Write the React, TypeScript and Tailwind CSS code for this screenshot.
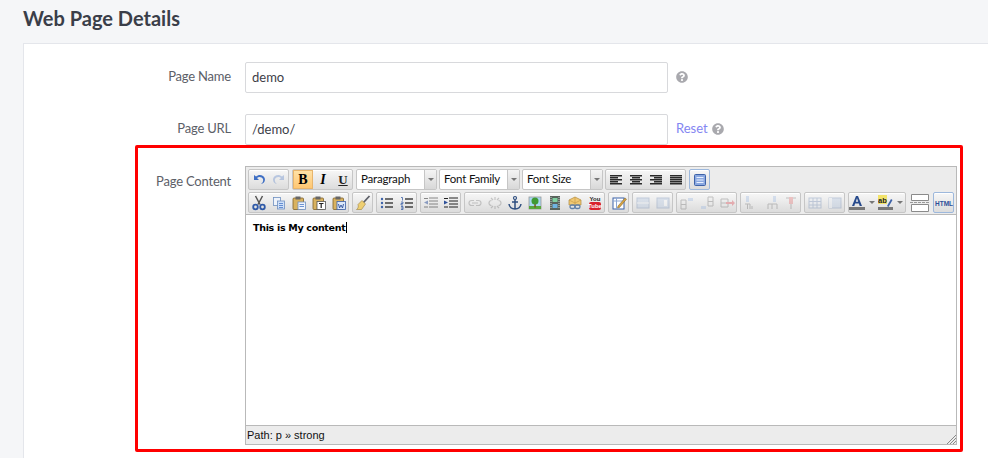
import type { ReactNode } from "react";
import { FaQuestionCircle } from "react-icons/fa";

function Ico({ children, off }: { children: ReactNode; off?: boolean }) {
  return (
    <svg viewBox="0 0 16 16" className={`h-4 w-4 ${off ? "opacity-30" : ""}`}>
      {children}
    </svg>
  );
}

function Btn({ children, on }: { children: ReactNode; on?: boolean }) {
  return (
    <span
      className={`flex h-full w-5 shrink-0 items-center justify-center ${
        on ? "bg-gradient-to-b from-[#ffe3a8] to-[#ffc56e] shadow-[inset_0_0_0_1px_#e8b56c]" : ""
      }`}
    >
      {children}
    </span>
  );
}

function Group({ children, blue, className = "" }: { children: ReactNode; blue?: boolean; className?: string }) {
  return (
    <div
      className={`flex h-[21px] shrink-0 items-center rounded-[2px] border bg-gradient-to-b from-[#f7f7f7] to-[#dcdcdc] shadow-[inset_0_1px_0_#fff] [&>*:last-child]:mr-[-1px] ${
        blue ? "border-[#9db8dc]" : "border-[#c6c6c6]"
      } ${className}`}
    >
      {children}
    </div>
  );
}

function Select({ label, className = "" }: { label: string; className?: string }) {
  return (
    <div className={`flex h-[21px] w-[81px] shrink-0 rounded-[2px] border border-[#c6c6c6] bg-white ${className}`}>
      <span className="flex-1 pl-[4px] text-[11.500px] leading-[18px] tracking-[-0.2px] text-[#111]">{label}</span>
      <span className="flex w-3 items-center justify-center border-l border-[#c6c6c6] bg-gradient-to-b from-[#f4f4f4] to-[#d8d8d8]">
        <span className="border-x-[3px] border-t-[3px] border-x-transparent border-t-[#777]" />
      </span>
    </div>
  );
}

function Lines({ rows }: { rows: [number, number][] }) {
  return (
    <Ico>
      {rows.map(([x, w], i) => (
        <rect key={i} x={x} y={3 + i * 2} width={w} height="1.5" fill="#2a2a2a" />
      ))}
    </Ico>
  );
}

function Row({ label, value, children }: { label: string; value: string; children: ReactNode }) {
  return (
    <div className="flex h-[31px] items-center">
      <label className="w-[207px] pb-[2px] text-right tracking-[-0.2px] text-[#5c6068]">{label}</label>
      <input
        readOnly
        value={value}
        className="ml-[14px] h-[31px] w-[423px] rounded-[2px] border border-[#d8d9dc] px-[6px] pb-[2px] text-[#3d4048] outline-none"
      />
      {children}
    </div>
  );
}

const Caret = ({ className }: { className: string }) => (
  <span className={`w-[6px] shrink-0 border-x-[3px] border-t-[3px] border-x-transparent border-t-[#777] ${className}`} />
);

const undo = (
  <Ico>
    <path d="M3 3v5h5L6 6c2-2 5-1 6 1 .6 2-.4 4-2 5 3-.4 4.400-3 3.800-5.500C13 3 8 1.500 5 4.500z" fill="#3f6fc4" />
  </Ico>
);
const redo = (
  <Ico off>
    <path d="M13 3v5H8l2-2c-2-2-5-1-6 1-.6 2 .4 4 2 5-3-.4-4.400-3-3.800-5.500C3 3 8 1.500 11 4.500z" fill="#3f6fc4" />
  </Ico>
);
const paper = (x: number, y: number, w: number, h: number, fill = "#fff") => (
  <rect x={x} y={y} width={w} height={h} fill={fill} stroke="#6f8fc0" strokeWidth=".8" />
);
const board = (
  <>
    <rect x="2" y="3" width="10.500" height="11.500" rx="1" fill="#d9b25f" stroke="#7d6128" strokeWidth=".8" />
    <rect x="4.500" y="1.500" width="5" height="3" fill="#666" />
  </>
);

export default function App() {
  return (
    <div className="relative h-[458px] w-[988px] overflow-hidden bg-[#f5f6f8] font-['Lato',sans-serif] text-[13px]">
      <h1 className="pl-[23px] pt-[4px] text-[20px] font-bold leading-[28px] text-[#3a3e49]">Web Page Details</h1>
      <div className="ml-[23px] mt-[11px] h-[500px] w-[1000px] border border-[#e4e6eb] bg-white pt-[18px]">
        <Row label="Page Name" value="demo">
          <FaQuestionCircle className="mb-[2px] ml-2 text-[12px] text-[#a9a9ae]" />
        </Row>
        <div className="mt-[21px]">
          <Row label="Page URL" value="/demo/">
            <a className="mb-[2px] ml-2 text-[#8486f2]">Reset</a>
            <FaQuestionCircle className="mb-[2px] ml-1 text-[12px] text-[#a9a9ae]" />
          </Row>
        </div>
        <div className="mt-[21px] flex">
          <label className="w-[207px] pt-[6px] text-right tracking-[-0.2px] text-[#5c6068]">Page Content</label>
          <div className="ml-[14px] flex h-[279px] w-[712px] flex-col border border-[#b9b9b9] bg-[#ececec]">
            <div className="flex h-[48px] flex-col gap-[2px] border-b border-[#b9b9b9] px-[2px] pt-[2px]">
              <div className="flex gap-[3px]">
                <Group>
                  <Btn>{undo}</Btn>
                  <Btn>{redo}</Btn>
                </Group>
                <Group>
                  <Btn on>
                    <b className="font-['Liberation_Serif',serif] text-[14px] font-bold text-black">B</b>
                  </Btn>
                  <Btn>
                    <b className="font-['Liberation_Serif',serif] text-[14px] font-bold italic text-black">I</b>
                  </Btn>
                  <Btn>
                    <b className="font-['Liberation_Serif',serif] text-[13px] font-bold text-[#222] underline">U</b>
                  </Btn>
                </Group>
                <Select label="Paragraph" />
                <Select label="Font Family" className="ml-[-1px]" />
                <Select label="Font Size" className="ml-[-1px]" />
                <Group className="ml-[-1px]">
                  <Btn><Lines rows={[[2, 12], [2, 8], [2, 12], [2, 8], [2, 12]]} /></Btn>
                  <Btn><Lines rows={[[2, 12], [4, 8], [2, 12], [4, 8], [2, 12]]} /></Btn>
                  <Btn><Lines rows={[[2, 12], [6, 8], [2, 12], [6, 8], [2, 12]]} /></Btn>
                  <Btn><Lines rows={[[2, 12], [2, 12], [2, 12], [2, 12], [2, 12]]} /></Btn>
                </Group>
                <Group blue>
                  <Btn>
                    <Ico>
                      <rect x="2.500" y="2.500" width="11" height="11" rx="1" fill="#8aa8e0" stroke="#3d62a8" />
                      <path d="M4.500 5.500h7M4.500 8h7M4.500 10.500h7" stroke="#e8f0ff" />
                    </Ico>
                  </Btn>
                </Group>
              </div>
              <div className="flex gap-[3px]">
                <Group>
                  <Btn>
                    <Ico>
                      <path d="M4.500 1l4.500 8.500M11.500 1L7 9.500" stroke="#555" strokeWidth="1.500" />
                      <circle cx="4.500" cy="12" r="2.300" fill="none" stroke="#2f5aa8" strokeWidth="1.800" />
                      <circle cx="11.500" cy="12" r="2.300" fill="none" stroke="#2f5aa8" strokeWidth="1.800" />
                    </Ico>
                  </Btn>
                  <Btn>
                    <Ico>
                      {paper(2.500, 2.500, 7, 8, "#eef3fb")}
                      {paper(6.500, 6, 7, 8, "#cfe0f8")}
                      <path d="M8 8.500h4M8 10.500h4M8 12.500h4" stroke="#4a78c8" strokeWidth=".8" />
                    </Ico>
                  </Btn>
                  <Btn>
                    <Ico>
                      {board}
                      {paper(7, 7, 7.500, 7.500, "#eef3fb")}
                      <path d="M8.500 9.500h4.500M8.500 11.500h4.500" stroke="#4a78c8" strokeWidth=".8" />
                    </Ico>
                  </Btn>
                  <Btn>
                    <Ico>
                      {board}
                      <rect x="6" y="6.500" width="8.500" height="8" fill="#fff" stroke="#555" strokeWidth=".8" />
                      <path d="M8 8.500h4.500M10.200 8.500v4.500" stroke="#222" strokeWidth="1.200" />
                    </Ico>
                  </Btn>
                  <Btn>
                    <Ico>
                      {board}
                      <rect x="6" y="6.500" width="8.500" height="8" fill="#dce8fa" stroke="#3d62a8" strokeWidth=".8" />
                      <path d="M7.500 9l1 4 1.500-3 1.500 3 1-4" stroke="#2c4f98" strokeWidth=".9" fill="none" />
                    </Ico>
                  </Btn>
                </Group>
                <Group>
                  <Btn>
                    <Ico>
                      <path d="M14.500 1L8 8" stroke="#5d5f68" strokeWidth="1.800" />
                      <path d="M7 5.500l3.500 3.500-4 5.500H1.500c2-1.500 2-3 1.500-5z" fill="#eecf72" stroke="#9a8040" strokeWidth=".6" />
                    </Ico>
                  </Btn>
                </Group>
                <Group>
                  <Btn>
                    <Ico>
                      <path d="M6 4h8M6 8h8M6 12h8" stroke="#444" strokeWidth="1.300" />
                      <circle cx="3" cy="4" r="1.200" fill="#3d62a8" />
                      <circle cx="3" cy="8" r="1.200" fill="#3d62a8" />
                      <circle cx="3" cy="12" r="1.200" fill="#3d62a8" />
                    </Ico>
                  </Btn>
                  <Btn>
                    <Ico>
                      <path d="M6 4h8M6 8h8M6 12h8" stroke="#444" strokeWidth="1.300" />
                      <path d="M2 2.500h1.500v3M2 7h2v1.500H2V10h2M2 11.500h2v3H2M2 13h2" stroke="#3d62a8" strokeWidth=".8" fill="none" />
                    </Ico>
                  </Btn>
                </Group>
                <Group>
                  <Btn>
                    <svg viewBox="0 0 16 16" className="h-4 w-4 opacity-50">
                      <path d="M6 3h9M6 6h9M6 9h9M6 12h9M1 3.500h4M1 12h4" stroke="#222" strokeWidth="1.200" />
                      <path d="M5 5.500L1 7.500 5 9.500z" fill="#2c4f98" />
                    </svg>
                  </Btn>
                  <Btn>
                    <Ico>
                      <path d="M6 3h9M6 6h9M6 9h9M6 12h9M1 3.500h4M1 12h4" stroke="#222" strokeWidth="1.200" />
                      <path d="M1 5.500l4 2-4 2z" fill="#2c4f98" />
                    </Ico>
                  </Btn>
                </Group>
                <Group>
                  <Btn>
                    <Ico off>
                      <path d="M2 8a2.500 2.500 0 012.500-2.500h2.500M14 8a2.500 2.500 0 01-2.500 2.500H9M2 8a2.500 2.500 0 002.500 2.500H7M14 8a2.500 2.500 0 00-2.500-2.500H9M5 8h6" stroke="#666" strokeWidth="1.200" fill="none" />
                    </Ico>
                  </Btn>
                  <Btn>
                    <Ico off>
                      <path d="M2 8a2.500 2.500 0 012.500-2.500M2 8a2.500 2.500 0 002.500 2.500M14 8a2.500 2.500 0 01-2.500 2.500M14 8a2.500 2.500 0 00-2.500-2.500M8 2v3M8 11v3M4 3l2 2M12 3l-2 2M4 13l2-2M12 13l-2-2" stroke="#666" strokeWidth="1.200" fill="none" />
                    </Ico>
                  </Btn>
                  <Btn>
                    <Ico>
                      <circle cx="8" cy="3" r="1.500" fill="none" stroke="#2f4f80" strokeWidth="1.200" />
                      <path d="M8 4.500V14M5 7h6M2 9c.5 3 3 5 6 5s5.500-2 6-5" stroke="#2f4f80" strokeWidth="1.500" fill="none" />
                    </Ico>
                  </Btn>
                  <Btn>
                    <Ico>
                      <rect x="2" y="2" width="12" height="12" fill="#a8d8f0" stroke="#9a9a9a" strokeWidth=".8" />
                      <path d="M2 11h12v3H2z" fill="#58a83c" />
                      <rect x="7.300" y="8" width="1.500" height="4.500" fill="#7c5226" />
                      <circle cx="8" cy="6" r="3.500" fill="#3f9a34" />
                    </Ico>
                  </Btn>
                  <Btn>
                    <Ico>
                      <rect x="3" y="1" width="10" height="14" fill="#59635c" />
                      <rect x="5.500" y="3" width="5" height="4" fill="#7fd0a0" />
                      <rect x="5.500" y="9" width="5" height="4" fill="#6fb4e0" />
                      <path d="M4 2v12M12 2v12" stroke="#c8d0cc" strokeWidth="1" strokeDasharray="1 1" />
                    </Ico>
                  </Btn>
                  <Btn>
                    <Ico>
                      <path d="M2 5l6-3 6 3v5H2z" fill="#f0c874" stroke="#b08a3c" strokeWidth=".7" />
                      <path d="M8 2v7M2 5l6 3 6-3" stroke="#c79c48" strokeWidth=".7" fill="none" />
                      <rect x="3" y="10" width="5" height="3.500" rx="1.700" fill="none" stroke="#5f7fa8" strokeWidth="1.300" />
                      <rect x="8" y="10" width="5" height="3.500" rx="1.700" fill="none" stroke="#5f7fa8" strokeWidth="1.300" />
                    </Ico>
                  </Btn>
                  <Btn>
                    <Ico>
                      <text x="8" y="6" textAnchor="middle" fontSize="6" fontWeight="700" fontFamily="Liberation Sans" fill="#222">You</text>
                      <rect x="2" y="7" width="12" height="8" rx="2" fill="#d9232e" />
                      <text x="8" y="13" textAnchor="middle" fontSize="6" fontWeight="700" fontFamily="Liberation Sans" fill="#fff">Tube</text>
                    </Ico>
                  </Btn>
                </Group>
                <Group>
                  <Btn>
                    <Ico>
                      <rect x="2" y="3" width="11" height="11" fill="#fff" stroke="#3d62a8" />
                      <path d="M2 6h11M5.500 3v11" stroke="#8aa6d4" />
                      <path d="M7 11l7-8 1.500 1.200L8.500 12.500 6.500 13z" fill="#d9a441" stroke="#6e5a30" strokeWidth=".5" />
                    </Ico>
                  </Btn>
                </Group>
                <Group>
                  <Btn>
                    <Ico off>
                      <rect x="2" y="3" width="12" height="10" fill="#a9c0e0" stroke="#5878aa" />
                      <path d="M2 8h12" stroke="#fff" />
                    </Ico>
                  </Btn>
                  <Btn>
                    <Ico off>
                      <rect x="2" y="3" width="12" height="10" fill="#a9c0e0" stroke="#5878aa" />
                      <rect x="9" y="5" width="3" height="6" fill="#fff" />
                    </Ico>
                  </Btn>
                </Group>
                <Group>
                  <Btn>
                    <Ico off>
                      <path d="M2 5h5v9H2zM2 9.500h5" stroke="#555" fill="none" />
                      <path d="M9 3h5v3H9" fill="#8fb0e0" />
                    </Ico>
                  </Btn>
                  <Btn>
                    <Ico off>
                      <path d="M9 2h5v9H9zM9 6.500h5" stroke="#555" fill="none" />
                      <path d="M2 11h5v3H2" fill="#8fb0e0" />
                    </Ico>
                  </Btn>
                  <Btn>
                    <Ico off>
                      <path d="M2 4h7v8H2zM2 8h7" stroke="#555" fill="none" />
                      <path d="M7 7h6V5l3 3-3 3V9H7z" fill="#d9232e" />
                    </Ico>
                  </Btn>
                </Group>
                <Group>
                  <Btn>
                    <Ico off>
                      <path d="M2 9h5v5M4.500 9v5M9 11v3" stroke="#555" fill="none" />
                      <rect x="3" y="1" width="3" height="6" fill="#8fb0e0" />
                    </Ico>
                  </Btn>
                  <Btn>
                    <Ico off>
                      <path d="M5 9h9v5M9 9v5M5 9v5" stroke="#555" fill="none" />
                      <rect x="10" y="1" width="3" height="6" fill="#8fb0e0" />
                    </Ico>
                  </Btn>
                  <Btn>
                    <Ico off>
                      <path d="M3 3h10M8 3v11" stroke="#555" fill="none" />
                      <rect x="6" y="2" width="4" height="7" fill="#e05a5a" />
                    </Ico>
                  </Btn>
                </Group>
                <Group>
                  <Btn>
                    <Ico off>
                      <rect x="2" y="3" width="12" height="10" fill="#e6ecf6" stroke="#5878aa" />
                      <path d="M6 3v10M10 3v10M2 6.500h12M2 10h12" stroke="#5878aa" />
                    </Ico>
                  </Btn>
                  <Btn>
                    <Ico off>
                      <rect x="2" y="3" width="12" height="10" fill="#a9c0e0" stroke="#5878aa" />
                      <rect x="2" y="3" width="3" height="10" fill="#e6ecf6" />
                    </Ico>
                  </Btn>
                </Group>
                <Group className="w-[58px]">
                  <span className="flex w-4 shrink-0">
                    <Ico>
                      <path d="M3 11L7 1h2l4 10h-2.300l-.8-2.400H6.100L5.300 11zM6.800 6.800h2.400L8 3.300z" fill="#274a8c" />
                      <rect x="0" y="12" width="16" height="3" fill="#777" />
                    </Ico>
                  </span>
                  <Caret className="ml-[4px]" />
                  <span className="ml-[3px] flex w-4 shrink-0">
                    <Ico>
                      <rect x="0" y="0" width="9" height="9" fill="#f2e36a" />
                      <text x="4.500" y="7.500" textAnchor="middle" fontSize="7.500" fontWeight="700" fontFamily="Liberation Sans" fill="#222">ab</text>
                      <path d="M9 11l4-7 1.500 1-4 7z" fill="#3d62a8" />
                      <rect x="0" y="12" width="15" height="3" fill="#777" />
                    </Ico>
                  </span>
                  <Caret className="ml-[3px]" />
                </Group>
                <span className="ml-[1px] flex h-[21px] w-5 shrink-0 items-center justify-center">
                  <svg viewBox="0 0 20 21" className="h-[21px] w-5">
                    <path d="M1.500 2.500h17v6h-17zM1.500 12.500h17v7h-17z" fill="#fff" stroke="#8a8a8a" />
                    <path d="M0 10.500h20" stroke="#999" strokeDasharray="3 1" />
                  </svg>
                </span>
                <Group blue>
                  <Btn>
                    <svg viewBox="0 0 20 10" className="h-[10px] w-5">
                      <text x="10" y="8" textAnchor="middle" fontSize="6.500" fontWeight="700" fontFamily="Liberation Sans" fill="#2c4f98">HTML</text>
                    </svg>
                  </Btn>
                </Group>
              </div>
            </div>
            <div className="flex-1 bg-white px-[7px] py-[6px] font-['DejaVu_Sans',sans-serif] text-[9.500px] font-bold leading-[13px] tracking-[-0.3px] text-black">
              <span className="border-r border-black pr-[1px]">This is My content</span>
            </div>
            <div className="relative flex h-[19px] items-center border-t border-[#b9b9b9] px-[1px] font-['Liberation_Sans',sans-serif] text-[11px] text-[#111]">
              Path: p » strong
              <svg viewBox="0 0 10 10" className="absolute bottom-0 right-0 h-[10px] w-[10px]">
                <path d="M1 10l9-9M4 10l6-6M7 10l3-3" stroke="#888" />
              </svg>
            </div>
          </div>
        </div>
      </div>
      <div className="absolute left-[135px] top-[145px] h-[307px] w-[828px] rounded-[2px] border-[3px] border-[#f00]" />
    </div>
  );
}
